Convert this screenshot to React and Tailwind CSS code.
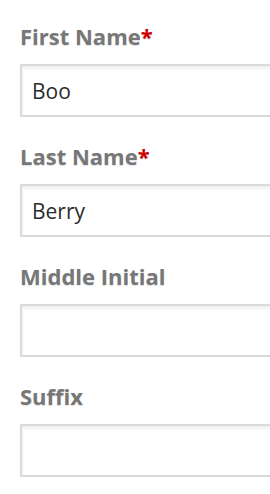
import React from "react";

const fields = [
  { label: "First Name", required: true, value: "Boo" },
  { label: "Last Name", required: true, value: "Berry" },
  { label: "Middle Initial", required: false, value: "" },
  { label: "Suffix", required: false, value: "" },
];

const App = () => {
  return (
    <div
      className="w-[270px] h-[494px] overflow-hidden bg-white pl-5 pt-[22px]"
      style={{ fontFamily: "'Open Sans', sans-serif" }}
    >
      {fields.map((f) => (
        <div key={f.label} className="mb-[25px]">
          <label className="block text-[22px] leading-[28px] font-bold text-[#777777] mb-[14px] [text-shadow:0_1px_1px_rgba(0,0,0,0.12)]">
            {f.label}
            {f.required && <span className="text-[#cc0000]">*</span>}
          </label>
          <input
            type="text"
            defaultValue={f.value}
            className="block w-[290px] h-[53px] border-2 border-[#dadada] bg-white px-[10px] text-[21px] text-[#2b2b2b] outline-none shadow-[inset_0_2px_4px_rgba(0,0,0,0.08)]"
          />
        </div>
      ))}
    </div>
  );
};

export default App;
